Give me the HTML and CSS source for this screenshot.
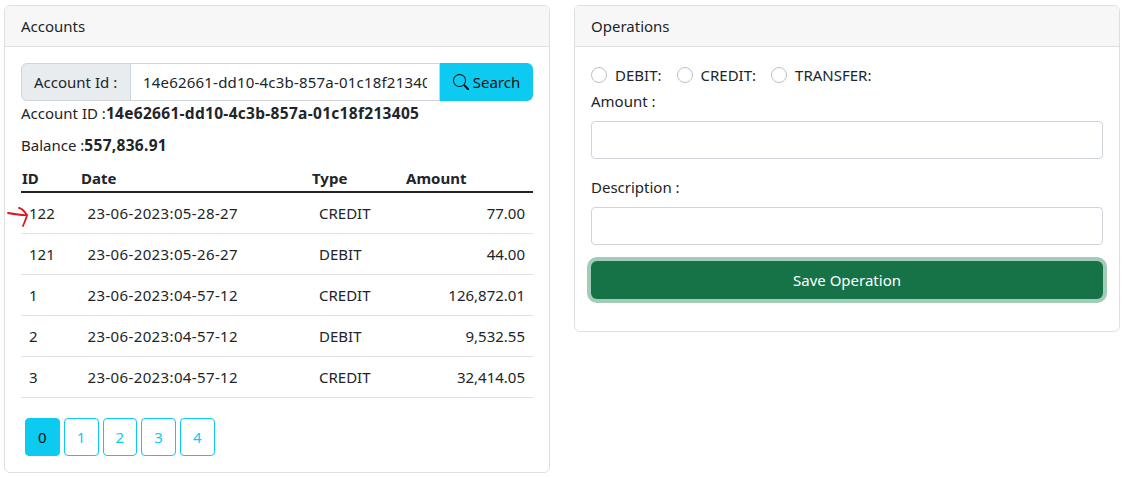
FILE: index.html
```html
<!DOCTYPE html>
<html lang="en">
<head>
<meta charset="utf-8">
<title>Accounts</title>
<link rel="stylesheet" href="styles.css">
</head>
<body>
<main class="layout">
  <section class="card">
    <header class="card-header">Accounts</header>
    <div class="card-body">
      <div class="input-group">
        <span class="addon">Account Id :</span>
        <input class="group-input" type="text" value="14e62661-dd10-4c3b-857a-01c18f213405">
        <button class="search-btn" type="button">
          <svg class="search-icon" viewBox="0 0 16 16" width="16" height="16" fill="currentColor"><path d="M11.742 10.344a6.5 6.5 0 1 0-1.397 1.398h-.001c.03.04.062.078.098.115l3.85 3.85a1 1 0 0 0 1.415-1.414l-3.85-3.85a1.007 1.007 0 0 0-.115-.1zM12 6.5a5.5 5.5 0 1 1-11 0 5.5 5.5 0 0 1 11 0z"/></svg>
          Search
        </button>
      </div>
      <div class="info-line first">Account ID :<strong>14e62661-dd10-4c3b-857a-01c18f213405</strong></div>
      <div class="info-line second">Balance :<strong>557,836.91</strong></div>
      <div class="table-wrap">
        <svg class="arrow" viewBox="0 0 24 24" width="24" height="24" fill="none" stroke="#e0141c" stroke-width="1.8" stroke-linecap="round" stroke-linejoin="round"><path d="M2 8 C5 8.500 8 9 12 9.500 C15 10 18 10.500 21 10 M13 3 C16 3.500 19 7 21 10 C20.500 13 18.500 17 17 21"/></svg>
        <table class="accounts">
          <thead>
            <tr><th class="c-id">ID</th><th class="c-date">Date</th><th class="c-type">Type</th><th class="c-amt">Amount</th></tr>
          </thead>
          <tbody>
            <tr><td>122</td><td class="date">23-06-2023:05-28-27</td><td>CREDIT</td><td class="num">77.00</td></tr>
            <tr><td>121</td><td class="date">23-06-2023:05-26-27</td><td>DEBIT</td><td class="num">44.00</td></tr>
            <tr><td>1</td><td class="date">23-06-2023:04-57-12</td><td>CREDIT</td><td class="num">126,872.01</td></tr>
            <tr><td>2</td><td class="date">23-06-2023:04-57-12</td><td>DEBIT</td><td class="num">9,532.55</td></tr>
            <tr><td>3</td><td class="date">23-06-2023:04-57-12</td><td>CREDIT</td><td class="num">32,414.05</td></tr>
          </tbody>
        </table>
      </div>
      <nav class="pager">
        <button class="page active" type="button">0</button>
        <button class="page" type="button">1</button>
        <button class="page" type="button">2</button>
        <button class="page" type="button">3</button>
        <button class="page" type="button">4</button>
      </nav>
    </div>
  </section>
  <section class="card ops">
    <header class="card-header">Operations</header>
    <div class="card-body">
      <div class="radios">
        <label class="radio"><span class="dot"></span>DEBIT:</label>
        <label class="radio"><span class="dot"></span>CREDIT:</label>
        <label class="radio"><span class="dot"></span>TRANSFER:</label>
      </div>
      <div class="field">
        <label class="field-label">Amount :</label>
        <input class="control" type="text">
      </div>
      <div class="field">
        <label class="field-label">Description :</label>
        <input class="control" type="text">
      </div>
      <button class="save" type="button">Save Operation</button>
    </div>
  </section>
</main>
</body>
</html>
```
FILE: styles.css
```css
* { box-sizing: border-box; }
html, body { margin: 0; padding: 0; background: #fff; }
body {
  font-family: "Noto Sans", "Open Sans", sans-serif;
  font-size: 15px;
  line-height: 24px;
  color: #212529;
}
.layout {
  display: grid;
  grid-template-columns: 546px 546px;
  column-gap: 24px;
  align-items: start;
  padding: 5px 0 0 4px;
}
.card {
  border: 1px solid #dfdfdf;
  border-radius: 6px;
  background: #fff;
  overflow: hidden;
  height: 468px;
}
.card.ops { height: 327px; }
.card-header {
  height: 41px;
  padding: 8px 16px;
  background: #f7f7f7;
  border-bottom: 1px solid #dfdfdf;
}
.card-body { padding: 16px; }
.input-group { display: flex; height: 38px; }
.addon {
  display: flex;
  align-items: center;
  padding: 0 12px;
  width: 110px;
  flex: none;
  background: #e9ecef;
  border: 1px solid #ced4da;
  border-radius: 6px 0 0 6px;
  white-space: nowrap;
}
.group-input {
  flex: 1;
  min-width: 0;
  height: 38px;
  margin-left: -1px;
  padding: 6px 12px;
  border: 1px solid #ced4da;
  font: inherit;
  letter-spacing: 0.2px;
  color: #212529;
  outline: none;
}
.search-btn {
  flex: none;
  width: 93px;
  display: flex;
  align-items: center;
  justify-content: center;
  gap: 4px;
  border: 0;
  border-radius: 0 6px 6px 0;
  background: #0dcaf0;
  color: #111;
  font: inherit;
}
.search-icon { flex: none; }
.info-line { height: 24px; }
.info-line.second { margin-top: 8px; }
.info-line strong { font-weight: 700; font-size: 15.5px; letter-spacing: 0.3px; }
.table-wrap { position: relative; margin-top: 8px; }
.arrow { position: absolute; left: -15px; top: 40px; z-index: 1; }
.accounts {
  width: 100%;
  border-collapse: collapse;
  table-layout: fixed;
}
.accounts th {
  height: 27px;
  padding: 0 1px;
  text-align: left;
  font-weight: 700;
  border-bottom: 2px solid #212529;
}
.c-id { width: 59px; }
.c-date { width: 231px; }
.c-type { width: 94px; }
.accounts td {
  height: 41px;
  padding: 8px;
  vertical-align: top;
  border-bottom: 1px solid #dee2e6;
}
.accounts td.date { letter-spacing: 0.37px; padding-left: 7.500px; }
.accounts td.num { text-align: right; }
.pager { display: flex; gap: 4px; padding: 20px 0 0 4px; }
.page {
  width: 34.75px;
  height: 38px;
  padding: 0;
  border: 1px solid #0dcaf0;
  border-radius: 4px;
  background: #fff;
  color: #0dcaf0;
  font: inherit;
}
.page.active { background: #0dcaf0; color: #111; }
.radios { display: flex; gap: 15px; height: 24px; }
.radio { display: flex; align-items: center; gap: 8px; }
.dot {
  width: 16px;
  height: 16px;
  border: 1px solid #bfbfbf;
  border-radius: 50%;
  background: #fff;
}
.field { display: flex; flex-direction: column; }
.field + .field { margin-top: 16px; }
.radios + .field { margin-top: 2px; }
.field-label { height: 24px; margin-bottom: 8px; }
.control {
  height: 38px;
  border: 1px solid #ced4da;
  border-radius: 4px;
  padding: 6px 12px;
  font: inherit;
}
.save {
  display: block;
  width: 100%;
  height: 38px;
  margin-top: 16px;
  border: 0;
  border-radius: 6px;
  background: #157347;
  color: #fff;
  font: inherit;
  box-shadow: 0 0 0 4px #a1ccb7;
}
```
